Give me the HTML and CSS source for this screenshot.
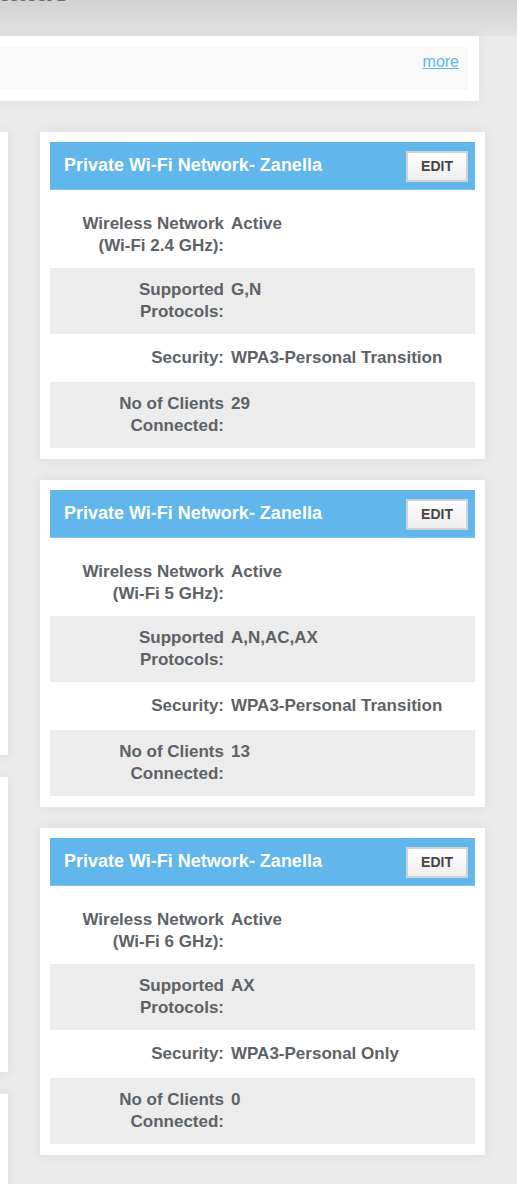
FILE: index.html
```html
<!DOCTYPE html>
<html>
<head>
<meta charset="utf-8">
<link rel="stylesheet" href="styles.css">
</head>
<body>
<div class="page">
  <div class="top">
    <div class="title-row"><h1 class="title">Wi-Fi Status</h1></div>
  </div>
  <div class="notice">
    <div class="notice-inner"><a class="more" href="#">more</a></div>
  </div>
  <div class="columns">
    <div class="left">
      <div class="panel p1"></div>
      <div class="panel p2"></div>
      <div class="panel p3"></div>
    </div>
    <div class="right">
      <div class="card">
        <div class="card-head"><span>Private Wi-Fi Network- Zanella</span><button class="edit">EDIT</button></div>
        <div class="rows">
          <div class="row first"><div class="label">Wireless Network (Wi-Fi 2.4 GHz):</div><div class="value">Active</div></div>
          <div class="row alt"><div class="label">Supported Protocols:</div><div class="value">G,N</div></div>
          <div class="row single"><div class="label">Security:</div><div class="value">WPA3-Personal Transition</div></div>
          <div class="row alt"><div class="label">No of Clients Connected:</div><div class="value">29</div></div>
        </div>
      </div>
      <div class="card">
        <div class="card-head"><span>Private Wi-Fi Network- Zanella</span><button class="edit">EDIT</button></div>
        <div class="rows">
          <div class="row first"><div class="label">Wireless Network (Wi-Fi 5 GHz):</div><div class="value">Active</div></div>
          <div class="row alt"><div class="label">Supported Protocols:</div><div class="value">A,N,AC,AX</div></div>
          <div class="row single"><div class="label">Security:</div><div class="value">WPA3-Personal Transition</div></div>
          <div class="row alt"><div class="label">No of Clients Connected:</div><div class="value">13</div></div>
        </div>
      </div>
      <div class="card">
        <div class="card-head"><span>Private Wi-Fi Network- Zanella</span><button class="edit">EDIT</button></div>
        <div class="rows">
          <div class="row first"><div class="label">Wireless Network (Wi-Fi 6 GHz):</div><div class="value">Active</div></div>
          <div class="row alt"><div class="label">Supported Protocols:</div><div class="value">AX</div></div>
          <div class="row single"><div class="label">Security:</div><div class="value">WPA3-Personal Only</div></div>
          <div class="row alt"><div class="label">No of Clients Connected:</div><div class="value">0</div></div>
        </div>
      </div>
    </div>
  </div>
</div>
</body>
</html>
```
FILE: styles.css
```css
html, body {
  margin: 0;
  padding: 0;
}
body {
  background: #ebebeb;
  font-family: "Liberation Sans", Arial, sans-serif;
  overflow: hidden;
  height: 1184px;
}
.page {
  margin-left: -292px;
  width: 809px;
}
.top {
  height: 36px;
  background: linear-gradient(#d2d2d2, #e3e3e3);
  margin-left: 292px;
  margin-right: -300px;
}
.title-row {
  display: flex;
  justify-content: flex-end;
  width: 70px;
  overflow: visible;
}
.title {
  margin: -27px 0 0 0;
  font-size: 30px;
  line-height: 36px;
  font-weight: bold;
  color: #6a6a6a;
  white-space: nowrap;
}
.notice {
  width: 749px;
  background: #fff;
  padding: 11px;
  box-shadow: 0 0 12px rgba(0, 0, 0, 0.06);
}
.notice-inner {
  height: 43px;
  box-sizing: border-box;
  background: #f8f8f8;
  display: flex;
  justify-content: flex-end;
  align-items: flex-start;
  padding: 6px 9px 0 0;
}
.more {
  color: #5cb8ea;
  font-size: 16px;
  line-height: 18px;
  text-decoration: underline;
}
.columns {
  display: flex;
  gap: 32px;
  margin-top: 31px;
}
.left {
  width: 300px;
  display: flex;
  flex-direction: column;
  gap: 22px;
}
.panel {
  background: #fff;
  box-shadow: 0 0 12px rgba(0, 0, 0, 0.07);
}
.p1 { height: 623px; }
.p2 { height: 295px; }
.p3 { height: 200px; }
.right {
  width: 445px;
  display: flex;
  flex-direction: column;
  gap: 21px;
}
.card {
  background: #fff;
  padding: 10px;
  box-shadow: 0 0 12px rgba(0, 0, 0, 0.07);
}
.card-head {
  height: 48px;
  box-sizing: border-box;
  background: #61b6eb;
  border-bottom: 1px solid #7cc4ef;
  display: flex;
  align-items: center;
  justify-content: space-between;
  padding: 0 7px 0 14px;
  color: #fff;
  font-size: 18px;
  font-weight: bold;
}
.edit {
  width: 62px;
  height: 31px;
  border: 2px solid #cfd3d6;
  background: linear-gradient(#ffffff, #eeeeee);
  font-family: "Liberation Sans", Arial, sans-serif;
  font-size: 14px;
  font-weight: bold;
  color: #454545;
  padding: 0;
  margin-top: 1px;
}
.rows {
  padding-bottom: 1px;
}
.row {
  display: grid;
  grid-template-columns: 174px 1fr;
  column-gap: 7px;
  padding: 11px 0;
  font-size: 17px;
  line-height: 22px;
  font-weight: bold;
  color: #5d6266;
}
.row.first {
  margin-top: 12px;
}
.row.single {
  padding: 13px 0;
}
.row.alt {
  background: #ececec;
}
.label {
  text-align: right;
  padding-left: 24px;
}
```
